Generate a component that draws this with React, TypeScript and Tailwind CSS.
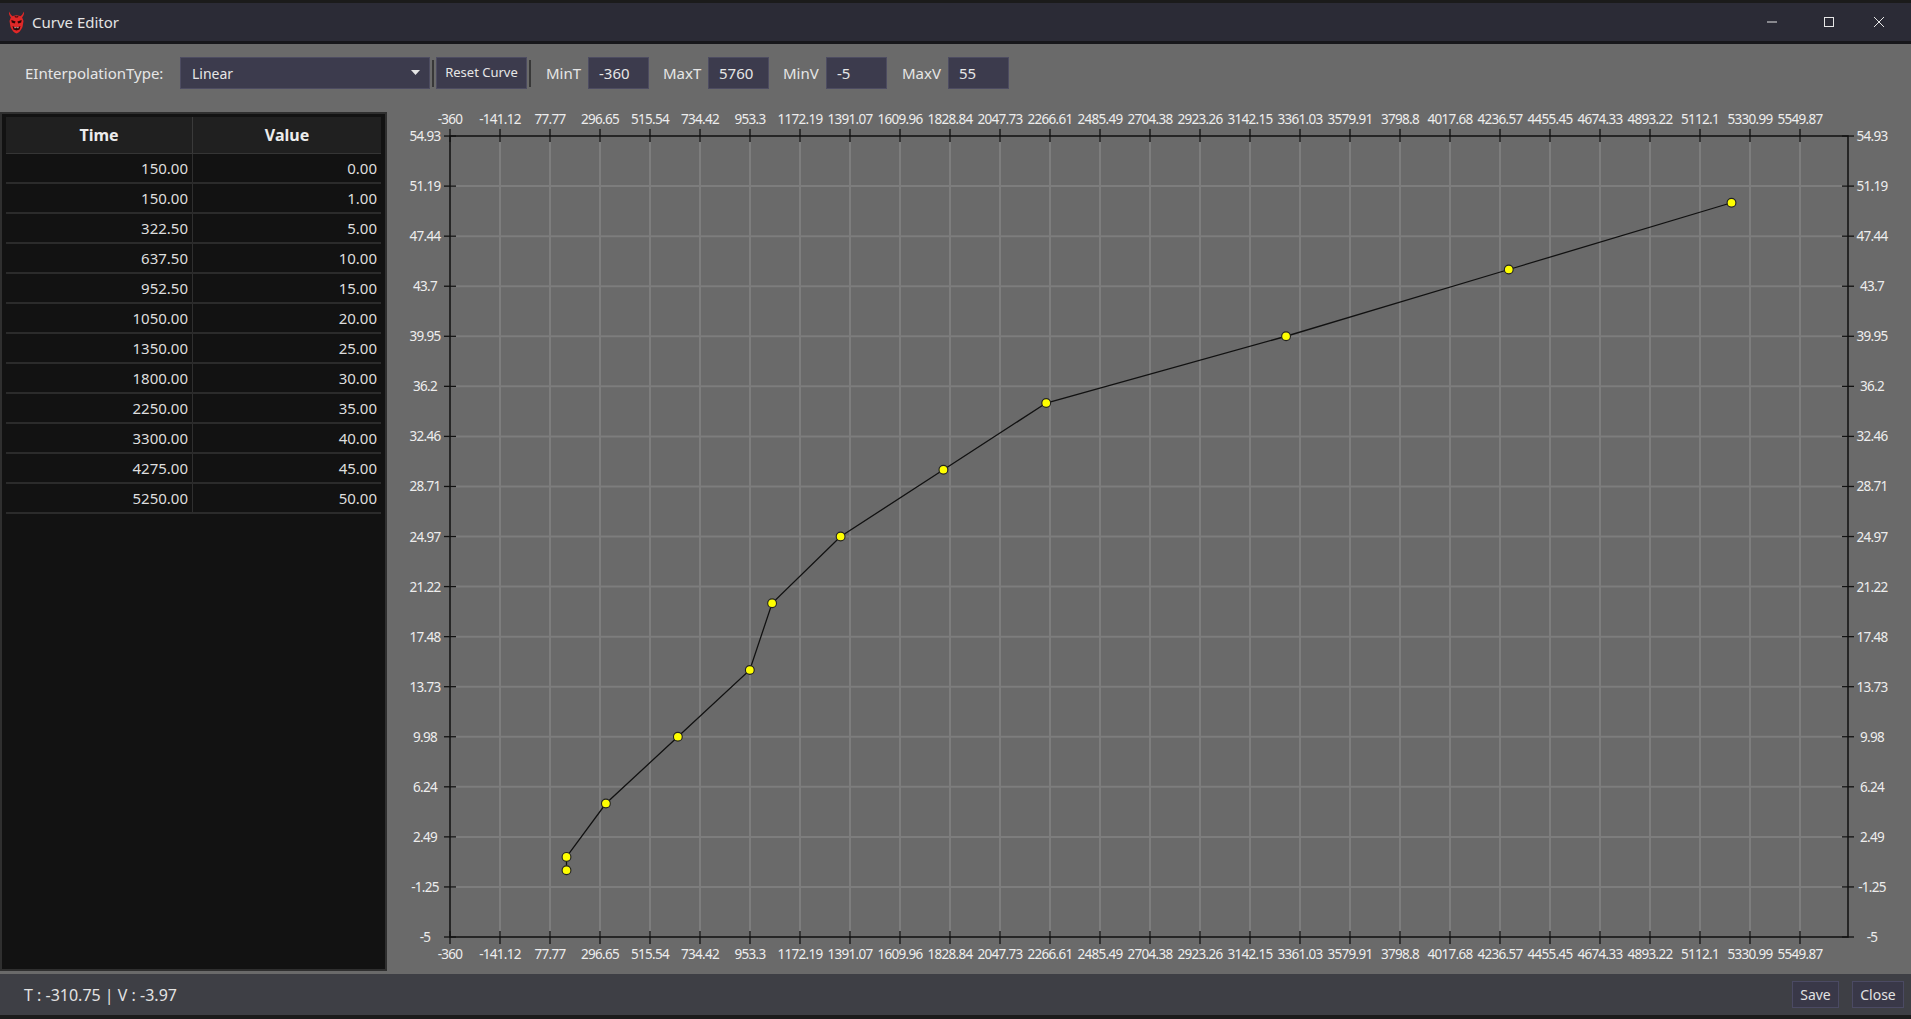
import React from "react";

const FONT = { fontFamily: '"Noto Sans", "Open Sans", sans-serif' };

const rows: [string, string][] = [
  ["150.00", "0.00"],
  ["150.00", "1.00"],
  ["322.50", "5.00"],
  ["637.50", "10.00"],
  ["952.50", "15.00"],
  ["1050.00", "20.00"],
  ["1350.00", "25.00"],
  ["1800.00", "30.00"],
  ["2250.00", "35.00"],
  ["3300.00", "40.00"],
  ["4275.00", "45.00"],
  ["5250.00", "50.00"],
];

const yLabels = [
  "-5", "-1.25", "2.49", "6.24", "9.98", "13.73", "17.48", "21.22", "24.97",
  "28.71", "32.46", "36.2", "39.95", "43.7", "47.44", "51.19", "54.93",
];

// plot geometry inside the chart svg
const L = 63;
const T = 36;
const R = 1461;
const B = 837;
const W = R - L;
const H = B - T;

const xLabels = Array.from({ length: 28 }, (_, k) => {
  const v = -360 + (k * 6120 * 50) / W;
  return String(Math.round(v * 100) / 100);
});

const px = (t: number) => L + ((t + 360) * W) / 6120;
const py = (v: number) => B - ((v + 5) * H) / 60;

function DevilIcon() {
  return (
    <svg width="17" height="23" viewBox="0 0 17 23">
      {/* horns */}
      <path d="M1 0.5 Q0.5 4 3.5 7 L5 5.5 Q2.5 4 1 0.5 Z" fill="#e02828" />
      <path d="M16 0.5 Q16.5 4 13.5 7 L12 5.5 Q14.5 4 16 0.5 Z" fill="#e02828" />
      {/* face */}
      <path d="M3 6 Q8.5 2.5 14 6 L15.5 10 L14.5 16 Q12 21.5 8.5 22.5 Q5 21.5 2.5 16 L1.5 10 Z" fill="#e02828" />
      {/* brow */}
      <path d="M6.5 4.8 Q8.5 6 10.5 4.8 L10 6.2 Q8.5 7 7 6.2 Z" fill="#3a0808" />
      {/* eyes */}
      <path d="M3.3 9 L7.6 10.6 L6.6 12.6 L3.8 11.4 Z" fill="#2a0606" />
      <path d="M13.7 9 L9.4 10.6 L10.4 12.6 L13.2 11.4 Z" fill="#2a0606" />
      {/* mouth */}
      <path d="M4.5 15 Q8.5 17.5 12.5 15 L11.5 18.6 Q8.5 20.2 5.5 18.6 Z" fill="#2a0606" />
      <path d="M6.2 16.2 L7 17.6 L7.8 16.6 L9.2 16.6 L10 17.6 L10.8 16.2 Z" fill="#f4f4f4" />
    </svg>
  );
}

function TitleBar() {
  return (
    <div className="h-[38px] bg-[#2b2b36] flex items-center text-[#e4e4e4]">
      <div className="ml-[8px] flex items-center">
        <DevilIcon />
      </div>
      <span className="ml-[7px] text-[15px]">Curve Editor</span>
      <div className="ml-auto flex items-center">
        <svg width="12" height="12" viewBox="0 0 12 12" className="mr-[45px]">
          <line x1="1" y1="6" x2="11" y2="6" stroke="#e6e6e6" strokeWidth="1" />
        </svg>
        <svg width="12" height="12" viewBox="0 0 12 12" className="mr-[38px]">
          <rect x="1.5" y="1.5" width="9" height="9" fill="none" stroke="#e6e6e6" strokeWidth="1" />
        </svg>
        <svg width="12" height="12" viewBox="0 0 12 12" className="mr-[26px]">
          <path d="M1 1 L11 11 M11 1 L1 11" stroke="#e6e6e6" strokeWidth="1" />
        </svg>
      </div>
    </div>
  );
}

function Field({ label, value, labelW, ml }: { label: string; value: string; labelW: string; ml: string }) {
  return (
    <div className={`flex items-center ${ml}`}>
      <span className={`${labelW} text-[15px] text-[#e6e6e6]`}>{label}</span>
      <div className="w-[61px] h-[32px] bg-[#3c3b4d] border border-[#4d4c61] flex items-center pl-[10px] text-[15px] text-[#e6e6e6]">
        {value}
      </div>
    </div>
  );
}

function Toolbar() {
  return (
    <div className="h-[56px] flex items-start pt-[13px] pl-[25px]">
      <span className="w-[155px] h-[32px] flex items-center text-[15px] text-[#e6e6e6]">EInterpolationType:</span>
      <div className="w-[250px] h-[32px] bg-[#3c3b4d] border border-[#4d4c61] flex items-center pl-[11px] pr-[9px] text-[14px] text-[#e6e6e6]">
        <span>Linear</span>
        <svg width="9" height="6" viewBox="0 0 9 6" className="ml-auto">
          <path d="M0 0 L9 0 L4.5 5 Z" fill="#e6e6e6" />
        </svg>
      </div>
      <div className="ml-[2px] mt-[3px] w-[2px] h-[27px] bg-[#383838]" />
      <div className="ml-[2px] w-[91px] h-[32px] bg-[#3c3b4d] border border-[#4d4c61] flex items-center justify-center text-[13px] text-[#e6e6e6]">
        Reset Curve
      </div>
      <div className="ml-[2px] mt-[3px] w-[2px] h-[27px] bg-[#383838]" />
      <Field label="MinT" value="-360" labelW="w-[42px]" ml="ml-[15px] h-[32px]" />
      <Field label="MaxT" value="5760" labelW="w-[45px]" ml="ml-[14px] h-[32px]" />
      <Field label="MinV" value="-5" labelW="w-[43px]" ml="ml-[14px] h-[32px]" />
      <Field label="MaxV" value="55" labelW="w-[46px]" ml="ml-[15px] h-[32px]" />
    </div>
  );
}

function KeyTable() {
  return (
    <div className="w-[387px] mt-[12px] h-[859px] bg-[#121212] border-2 border-[#2f2f2f] pt-[3px] px-[4px] shrink-0">
      <div className="flex h-[37px] bg-[#202020] border-b border-[#353535] text-[16px] font-bold text-[#ececec]">
        <div className="w-[187px] flex items-center justify-center border-r border-[#3a3a3a]">Time</div>
        <div className="flex-1 flex items-center justify-center">Value</div>
      </div>
      {rows.map(([t, v], i) => (
        <div key={i} className="flex h-[30px] border-b-2 border-[#2b2b2b] text-[15px] text-[#dedede]">
          <div className="w-[187px] flex items-center justify-end pr-[4px] border-r border-[#2f2f2f]">{t}</div>
          <div className="flex-1 flex items-center justify-end pr-[4px]">{v}</div>
        </div>
      ))}
    </div>
  );
}

function Chart() {
  const pts = rows.map(([t, v]) => [px(parseFloat(t)), py(parseFloat(v))]);
  const xs = Array.from({ length: 28 }, (_, k) => L + k * 50);
  const ys = yLabels.map((_, k) => B - k * 50.06);
  const lbl = { fill: "#ededed", fontSize: 13.5, letterSpacing: -0.7, textAnchor: "middle" as const, dominantBaseline: "central" as const };
  return (
    <svg width="1524" height="874" className="block" style={FONT}>
      {xs.slice(1).map((x, i) => (
        <line key={"gx" + i} x1={x} y1={T} x2={x} y2={B} stroke="#7d7d7d" strokeWidth="2" />
      ))}
      {ys.slice(1, -1).map((y, i) => (
        <line key={"gy" + i} x1={L} y1={y} x2={R} y2={y} stroke="#7d7d7d" strokeWidth="2" />
      ))}
      <rect x={L} y={T} width={W} height={H} fill="none" stroke="#111" strokeWidth="1.5" />
      {xs.map((x, i) => (
        <g key={"tx" + i}>
          <line x1={x} y1={T - 7} x2={x} y2={T + 6} stroke="#111" strokeWidth="1.3" />
          <line x1={x} y1={B - 6} x2={x} y2={B + 7} stroke="#111" strokeWidth="1.3" />
          <text x={x} y={T - 17} {...lbl}>
            {xLabels[i]}
          </text>
          <text x={x} y={B + 17} {...lbl}>
            {xLabels[i]}
          </text>
        </g>
      ))}
      {ys.map((y, i) => (
        <g key={"ty" + i}>
          <line x1={L - 6} y1={y} x2={L + 6} y2={y} stroke="#111" strokeWidth="1.3" />
          <line x1={R - 6} y1={y} x2={R + 6} y2={y} stroke="#111" strokeWidth="1.3" />
          <text x={38} y={y} {...lbl}>
            {yLabels[i]}
          </text>
          <text x={1485} y={y} {...lbl}>
            {yLabels[i]}
          </text>
        </g>
      ))}
      <polyline points={pts.map((p) => p.join(",")).join(" ")} fill="none" stroke="#111" strokeWidth="1.3" />
      {pts.map(([x, y], i) => (
        <circle key={"p" + i} cx={x} cy={y} r="4.4" fill="#ffff00" stroke="#222" strokeWidth="1.1" />
      ))}
    </svg>
  );
}

export default function App() {
  return (
    <div className="w-[1911px] h-[1019px] flex flex-col bg-[#6a6a6a] overflow-hidden" style={FONT}>
      <div className="h-[3px] bg-[#1b1b1b]" />
      <TitleBar />
      <div className="h-[3px] bg-[#17171b]" />
      <Toolbar />
      <div className="flex h-[874px]">
        <KeyTable />
        <Chart />
      </div>
      <div className="h-[41px] bg-[#3e3f45] flex items-center text-[#e2e2e2]">
        <span className="ml-[24px] text-[16px]">T : -310.75 | V : -3.97</span>
        <div className="ml-auto w-[47px] h-[27px] bg-[#393848] border border-[#4b4a63] flex items-center justify-center text-[14px]">
          Save
        </div>
        <div className="ml-[13px] mr-[7px] w-[52px] h-[27px] bg-[#393848] border border-[#4b4a63] flex items-center justify-center text-[14px]">
          Close
        </div>
      </div>
      <div className="h-[4px] bg-[#1b1b1b]" />
    </div>
  );
}
